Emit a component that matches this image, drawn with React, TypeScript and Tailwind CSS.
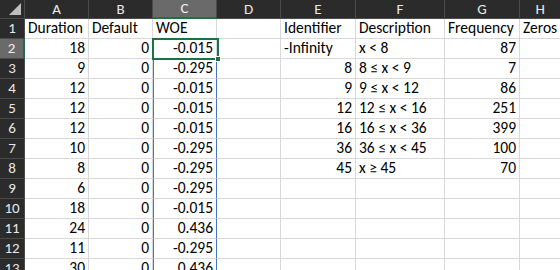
import React from 'react';

const cols = ['A', 'B', 'C', 'D', 'E', 'F', 'G', 'H'];

const rows: string[][] = [
  ['Duration', 'Default', 'WOE', '', 'Identifier', 'Description', 'Frequency', 'Zeros'],
  ['18', '0', '-0.015', '', '-Infinity', 'x < 8', '87', ''],
  ['9', '0', '-0.295', '', '8', '8 ≤ x < 9', '7', ''],
  ['12', '0', '-0.015', '', '9', '9 ≤ x < 12', '86', ''],
  ['12', '0', '-0.015', '', '12', '12 ≤ x < 16', '251', ''],
  ['12', '0', '-0.015', '', '16', '16 ≤ x < 36', '399', ''],
  ['10', '0', '-0.295', '', '36', '36 ≤ x < 45', '100', ''],
  ['8', '0', '-0.295', '', '45', 'x ≥ 45', '70', ''],
  ['6', '0', '-0.295', '', '', '', '', ''],
  ['18', '0', '-0.015', '', '', '', '', ''],
  ['24', '0', '0.436', '', '', '', '', ''],
  ['11', '0', '-0.295', '', '', '', '', ''],
  ['30', '0', '0.436', '', '', '', '', ''],
];

const isNum = (s: string) => /^-?\d+(\.\d+)?$/.test(s);

const App: React.FC = () => {
  return (
    <div className="w-[560px] h-[270px] overflow-hidden bg-white font-['Carlito','Lato',sans-serif] text-[15.5px] text-black">
      <div className="grid grid-cols-[25px_64px_64px_64px_64px_75px_89px_75px_1fr]">
        {/* column headers */}
        <div className="relative h-[19px] bg-[#2b2b2b] border-r border-b border-[#4a4a4a] overflow-hidden">
          <div className="absolute right-[3px] bottom-[3px] w-0 h-0 border-l-[12px] border-l-transparent border-b-[12px] border-b-[#bdbdbd]" />
        </div>
        {cols.map((c) => (
          <div
            key={c}
            className={
              c === 'C'
                ? 'h-[19px] bg-[#6a6a6a] border-r border-[#4a4a4a] border-b-2 border-b-[#1e7145] flex items-center justify-center text-[15px] text-[#f0f0f0]'
                : 'h-[19px] bg-[#2b2b2b] border-r border-b border-[#4a4a4a] flex items-center justify-center text-[15px] text-[#e8e8e8]'
            }
          >
            {c}
          </div>
        ))}

        {rows.map((r, i) => (
          <React.Fragment key={i}>
            <div
              className={
                i === 1
                  ? 'h-[20px] bg-[#6a6a6a] border-b border-[#4a4a4a] border-r-2 border-r-[#1e7145] flex items-center justify-center text-[15px] text-[#f0f0f0]'
                  : 'h-[20px] bg-[#2b2b2b] border-r border-b border-[#4a4a4a] flex items-center justify-center text-[15px] text-[#e8e8e8]'
              }
            >
              {i + 1}
            </div>
            {r.map((v, j) => {
              const num = isNum(v);
              const blue = j === 2 && i >= 2;
              const sel = j === 2 && i === 1;
              return (
                <div
                  key={j}
                  className={
                    'relative h-[20px] border-b border-[#d9d9d9] flex items-end pb-[1px] px-[3px] whitespace-nowrap leading-[18px] ' +
                    (num ? 'justify-end ' : 'justify-start ') +
                    (blue
                      ? 'border-l border-l-[#4472c4] border-r border-r-[#4472c4] '
                      : 'border-r border-r-[#d9d9d9] ') +
                    (sel ? 'z-10' : '')
                  }
                >
                  {v}
                  {sel && (
                    <>
                      <div className="absolute left-[-1px] top-[-1px] w-[67px] h-[22px] border-2 border-[#1e7145] pointer-events-none" />
                      <div className="absolute left-[62px] top-[17px] w-[6px] h-[6px] bg-[#1e7145] border border-white" />
                    </>
                  )}
                </div>
              );
            })}
          </React.Fragment>
        ))}
      </div>
    </div>
  );
};

export default App;
